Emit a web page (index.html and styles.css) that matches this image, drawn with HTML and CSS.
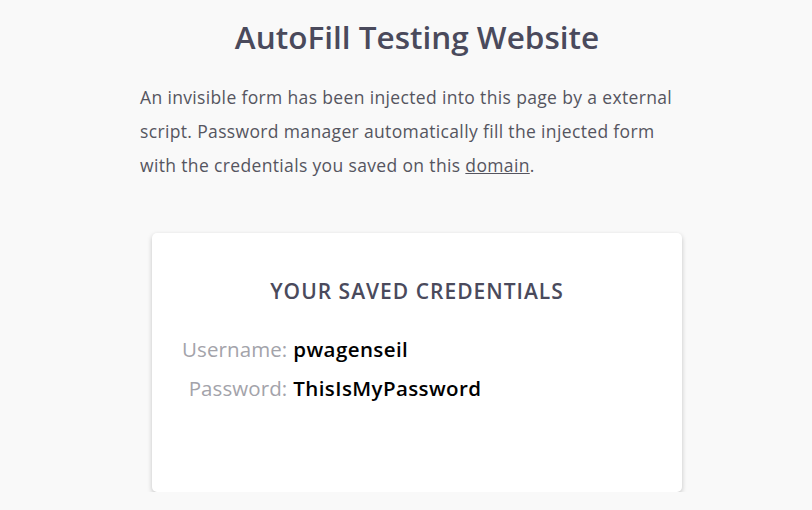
FILE: index.html
```html
<!DOCTYPE html>
<html lang="en">
<head>
<meta charset="utf-8">
<title>AutoFill Testing Website</title>
<link rel="stylesheet" href="styles.css">
</head>
<body>
<main class="page">
  <h1 class="title">AutoFill Testing Website</h1>
  <p class="intro">An invisible form has been injected into this page by a external script. Password manager automatically fill the injected form with the credentials you saved on this <a href="#" class="link">domain</a>.</p>
  <section class="card">
    <h2 class="card-title">YOUR SAVED CREDENTIALS</h2>
    <div class="creds">
      <span class="label">Username:</span><span class="value">pwagenseil</span>
      <span class="label">Password:</span><span class="value">ThisIsMyPassword</span>
    </div>
  </section>
</main>
</body>
</html>
```

FILE: styles.css
```css
html, body {
  margin: 0;
  padding: 0;
  background: #f9f9f9;
}
body {
  font-family: "Open Sans", "DejaVu Sans", sans-serif;
}
.page {
  width: 554px;
  margin: 0 0 0 140px;
  display: flex;
  flex-direction: column;
}
.title {
  margin: 17px 0 0;
  text-align: center;
  font-size: 31.5px;
  line-height: 40px;
  font-weight: 600;
  color: #4a4a5c;
}
.intro {
  margin: 23px 0 0;
  max-width: 540px;
  font-size: 17.5px;
  letter-spacing: 0.35px;
  line-height: 34px;
  color: #555560;
}
.link {
  color: #555560;
  text-decoration: underline;
}
.card {
  margin: 51px 12px 0;
  height: 259px;
  box-sizing: border-box;
  background: #ffffff;
  border-radius: 5px;
  box-shadow: 0 2px 5px rgba(0, 0, 0, 0.22);
  padding: 43px 30px 0;
}
.card-title {
  margin: 0;
  text-align: center;
  font-size: 21px;
  letter-spacing: 1px;
  line-height: 30px;
  font-weight: 600;
  color: #4a4a5c;
}
.creds {
  margin-top: 29px;
  display: grid;
  grid-template-columns: auto auto;
  column-gap: 6px;
  row-gap: 11px;
  justify-content: start;
  font-size: 20.5px;
  letter-spacing: 0.1px;
  line-height: 28px;
}
.label {
  text-align: right;
  color: #a3a3aa;
}
.value {
  color: #000;
  font-weight: 600;
  letter-spacing: 0.4px;
}
```
